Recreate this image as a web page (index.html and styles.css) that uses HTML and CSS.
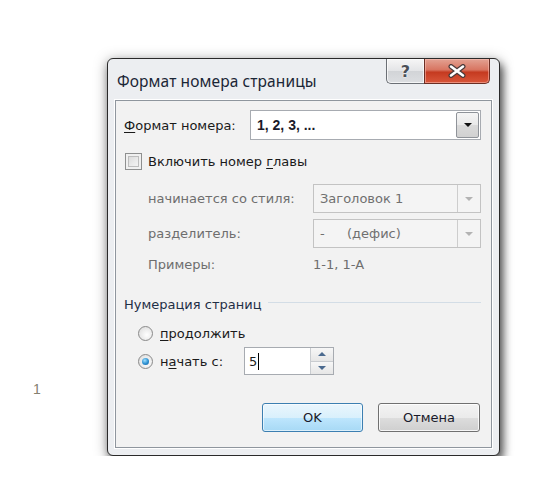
FILE: index.html
```html
<!DOCTYPE html>
<html lang="ru">
<head>
<meta charset="utf-8">
<title>Формат номера страницы</title>
<link rel="stylesheet" href="styles.css">
</head>
<body>
<div class="page">
  <div class="gutter"><span class="pagenum">1</span></div>
  <div class="window">
    <div class="titlebar">
      <span class="title">Формат номера страницы</span>
      <div class="caption">
        <span class="cap-help">?</span>
        <span class="cap-close">
          <svg width="22" height="14" viewBox="0 0 22 14">
            <path d="M5 2.5 L17 11.5 M17 2.5 L5 11.5" stroke="#4a3a3a" stroke-width="5" stroke-linecap="round" fill="none"/>
            <path d="M5 2.5 L17 11.5 M17 2.5 L5 11.5" stroke="#ffffff" stroke-width="2.6" stroke-linecap="round" fill="none"/>
          </svg>
        </span>
      </div>
    </div>
    <div class="client">
      <div class="row row-format">
        <span class="lbl lbl-format"><u>Ф</u>ормат номера:</span>
        <div class="combo">
          <span class="combo-text strong">1, 2, 3, ...</span>
          <span class="combo-btn"><span class="tri"></span></span>
        </div>
      </div>

      <div class="row row-check">
        <span class="checkbox"></span>
        <span class="lbl">Включить номер <u>г</u>лавы</span>
      </div>

      <div class="row row-sub row-style">
        <span class="lbl dis lbl-sub">начинается со стиля:</span>
        <div class="combo combo-dis">
          <span class="combo-text">Заголовок 1</span>
          <span class="combo-btn-dis"><span class="tri tri-dis"></span></span>
        </div>
      </div>

      <div class="row row-sub row-sep">
        <span class="lbl dis lbl-sub">разделитель:</span>
        <div class="combo combo-dis">
          <span class="combo-text"><span class="dash">-</span>(дефис)</span>
          <span class="combo-btn-dis"><span class="tri tri-dis"></span></span>
        </div>
      </div>

      <div class="row row-sub row-examples">
        <span class="lbl dis lbl-sub">Примеры:</span>
        <span class="lbl dis">1-1, 1-A</span>
      </div>

      <div class="group-head">
        <span class="lbl group-title">Нумерация страниц</span>
        <span class="group-line"></span>
      </div>

      <div class="row row-radio1">
        <span class="radio"></span>
        <span class="lbl"><u>п</u>родолжить</span>
      </div>

      <div class="row row-radio2">
        <span class="radio radio-on"><span class="dot"></span></span>
        <span class="lbl lbl-start">н<u>а</u>чать с:</span>
        <div class="spin">
          <span class="spin-text">5<span class="caret"></span></span>
          <span class="spin-btns">
            <span class="spin-up"><span class="stri stri-up"></span></span>
            <span class="spin-down"><span class="stri stri-down"></span></span>
          </span>
        </div>
      </div>

      <div class="row row-buttons">
        <span class="btn btn-default">OK</span>
        <span class="btn">Отмена</span>
      </div>
    </div>
  </div>
</div>
</body>
</html>
```

FILE: styles.css
```css
html, body {
  margin: 0;
  padding: 0;
  background: #ffffff;
}

body {
  font-family: "DejaVu Sans", "Liberation Sans", sans-serif;
  font-size: 13px;
  color: #1a1a1a;
}

.page {
  display: grid;
  grid-template-columns: 107px 393px;
  padding-top: 58px;
}

.gutter {
  padding-top: 323px;
  padding-left: 33px;
}

.pagenum {
  font-family: "Liberation Sans", sans-serif;
  font-size: 14px;
  color: #85806f;
}

.window {
  width: 391px;
  height: 396px;
  border: 1px solid #2a2a2a;
  border-radius: 6px;
  background: #eceef1;
  box-shadow: 3px 6px 9px rgba(0, 0, 0, 0.6), 0 2px 14px rgba(0, 0, 0, 0.35);
  display: flex;
  flex-direction: column;
}

.titlebar {
  height: 41px;
  display: flex;
  align-items: flex-start;
  padding-left: 9px;
}

.title {
  font-family: "Noto Sans", "DejaVu Sans", sans-serif;
  font-size: 15.5px;
  color: #1b2636;
  margin-top: 11px;
  letter-spacing: 0.1px;
}

.caption {
  margin-left: auto;
  margin-right: 9px;
  display: flex;
  height: 25px;
}

.cap-help {
  width: 37px;
  height: 24px;
  border: 1px solid #6b6f75;
  border-top: none;
  border-right: none;
  border-radius: 0 0 0 5px;
  background: linear-gradient(#f6f6f6, #e3e4e6 50%, #d2d4d7 51%, #dcdee1);
  display: flex;
  align-items: center;
  justify-content: center;
  font-family: "DejaVu Sans", sans-serif;
  font-weight: bold;
  font-size: 16px;
  color: #4b5058;
  text-shadow: 0 0 2px #ffffff, 0 0 1px #ffffff;
  box-shadow: inset 0 0 0 1px rgba(255, 255, 255, 0.7);
}

.cap-close {
  width: 64px;
  height: 24px;
  border: 1px solid #6a2e24;
  border-top: none;
  border-radius: 0 0 5px 0;
  background: linear-gradient(#e3a293, #d87561 45%, #c53a20 55%, #d9563a);
  display: flex;
  align-items: center;
  justify-content: center;
  box-shadow: inset 0 0 0 1px rgba(255, 200, 190, 0.5);
}

.client {
  flex: 1;
  margin: 0 7px 7px 7px;
  border: 1px solid #8f969e;
  box-shadow: 0 0 0 1px #ffffff;
  background: #f2f2f2;
  padding: 9px 10px 0 8px;
  display: flex;
  flex-direction: column;
}

.row {
  display: flex;
  align-items: center;
}

.lbl {
  white-space: nowrap;
}

.lbl u {
  text-decoration: underline;
  text-underline-offset: 2px;
}

.dis {
  color: #6e6e6e;
}

.strong {
  font-family: "Liberation Sans", sans-serif;
  font-size: 14px;
  font-weight: bold;
  color: #1a1a2a;
}

.row-format {
  height: 30px;
}

.lbl-format {
  width: 126px;
}

.combo {
  flex: 1;
  height: 28px;
  border: 1px solid #a7abb1;
  background: #ffffff;
  display: flex;
  align-items: center;
}

.combo-text {
  flex: 1;
  padding-left: 6px;
}

.combo-btn {
  width: 21px;
  height: 24px;
  margin-right: 1px;
  border: 1px solid #8f9399;
  border-radius: 2px;
  background: linear-gradient(#f5f5f5, #e9e9e9 50%, #dadada 51%, #d1d1d1);
  display: flex;
  align-items: center;
  justify-content: center;
}

.tri {
  width: 0;
  height: 0;
  border-left: 4px solid transparent;
  border-right: 4px solid transparent;
  border-top: 4px solid #111111;
}

.tri-dis {
  border-top-color: #b3b3b3;
}

.combo-dis {
  background: #f4f4f4;
  border-color: #c3c3c3;
  color: #707070;
  height: 27px;
}

.combo-btn-dis {
  width: 22px;
  height: 27px;
  border-left: 1px solid #cdcdcd;
  display: flex;
  align-items: center;
  justify-content: center;
}

.dash {
  display: inline-block;
  width: 27px;
}

.row-check {
  margin-top: 13px;
  height: 17px;
}

.checkbox {
  width: 15px;
  height: 15px;
  margin-left: 1px;
  margin-right: 6px;
  border: 1px solid #8e8f8f;
  background: linear-gradient(135deg, #d4d4d4, #ececec 60%, #f8f8f8);
  box-shadow: inset 0 0 0 2px #f0f0f0, inset 0 0 0 3px #bdbdbd;
}

.row-sub {
  padding-left: 24px;
}

.lbl-sub {
  width: 165px;
}

.row-style {
  margin-top: 14px;
  height: 29px;
}

.row-sep {
  margin-top: 6px;
  height: 29px;
}

.row-examples {
  margin-top: 6px;
  height: 20px;
}

.group-head {
  display: flex;
  align-items: center;
  margin-top: 21px;
  height: 18px;
}

.group-title {
  color: #1f2f46;
}

.group-line {
  flex: 1;
  height: 1px;
  margin-left: 7px;
  margin-top: -3px;
  background: #d3dde6;
}

.row-radio1 {
  margin-top: 11px;
  height: 18px;
  padding-left: 14px;
}

.radio {
  width: 13px;
  height: 13px;
  border: 1px solid #8a8a8a;
  border-radius: 50%;
  background: radial-gradient(circle at 60% 60%, #ffffff, #e4e4e4 70%, #cfcfcf);
  margin-right: 7px;
  display: flex;
  align-items: center;
  justify-content: center;
}

.radio-on .dot {
  width: 7px;
  height: 7px;
  border-radius: 50%;
  background: radial-gradient(circle at 40% 35%, #9fe0ff, #2a8ed0 55%, #1a5f99);
}

.row-radio2 {
  margin-top: 5px;
  height: 28px;
  padding-left: 14px;
}

.lbl-start {
  width: 84px;
}

.spin {
  width: 88px;
  height: 26px;
  border: 1px solid #a7abb1;
  background: #ffffff;
  display: flex;
}

.spin-text {
  flex: 1;
  padding-left: 4px;
  display: flex;
  align-items: center;
}

.caret {
  display: inline-block;
  width: 1px;
  height: 17px;
  background: #000000;
  margin-left: 1px;
}

.spin-btns {
  width: 22px;
  display: flex;
  flex-direction: column;
  border-left: 1px solid #c9ccd0;
}

.spin-up, .spin-down {
  flex: 1;
  display: flex;
  align-items: center;
  justify-content: center;
  background: linear-gradient(#f7f7f7, #e6e6e6);
}

.spin-up {
  border-bottom: 1px solid #c9ccd0;
}

.stri {
  width: 0;
  height: 0;
  border-left: 4px solid transparent;
  border-right: 4px solid transparent;
}

.stri-up {
  border-bottom: 4px solid #4b6a8f;
}

.stri-down {
  border-top: 4px solid #4b6a8f;
}

.row-buttons {
  margin-top: 28px;
  justify-content: flex-end;
  gap: 15px;
  padding-right: 1px;
}

.btn {
  width: 100px;
  height: 27px;
  border: 1px solid #707070;
  border-radius: 3px;
  background: linear-gradient(#f3f3f3, #ebebeb 50%, #dddddd 51%, #cfcfcf);
  box-shadow: inset 0 0 0 1px rgba(255, 255, 255, 0.8);
  display: flex;
  align-items: center;
  justify-content: center;
  color: #1a1a2a;
}

.btn-default {
  width: 99px;
  border-color: #3c7fb1;
  background: linear-gradient(#eaf6fd, #d9f0fc 50%, #bee6fd 51%, #a7d9f5);
  box-shadow: inset 0 0 0 1px rgba(255, 255, 255, 0.6);
}
```
